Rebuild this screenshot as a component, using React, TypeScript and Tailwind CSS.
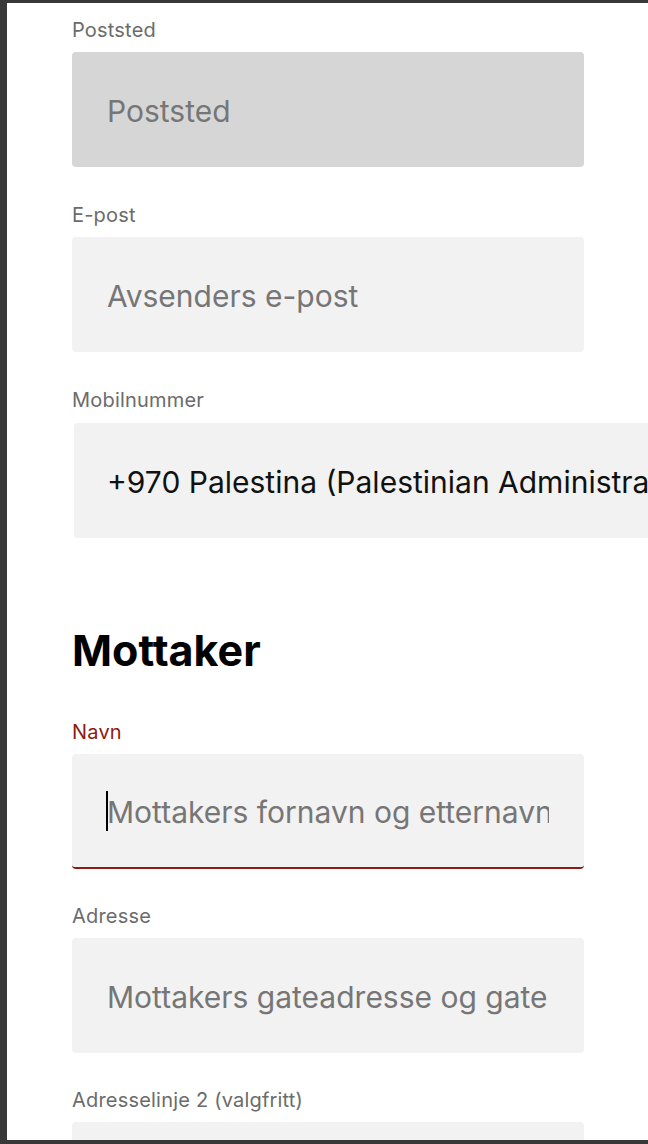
import React from 'react';

const font = { fontFamily: 'Inter, "Noto Sans", sans-serif' };

function Label({ text, error }: { text: string; error?: boolean }) {
  return (
    <div
      className={`h-6 text-[20px] leading-6 tracking-[0.2px] ${error ? 'text-[#8c1b13]' : 'text-[#6b6b6b]'}`}
    >
      {text}
    </div>
  );
}

function Field({
  label,
  placeholder,
  disabled,
  error,
  caret,
}: {
  label: string;
  placeholder?: string;
  disabled?: boolean;
  error?: boolean;
  caret?: boolean;
}) {
  return (
    <div className="flex flex-col gap-[10px]">
      <Label text={label} error={error} />
      <div
        className={`relative flex h-[115px] w-[512px] items-center rounded-[4px] px-[35px] pt-[3px] ${
          disabled ? 'bg-[#d6d6d6]' : 'bg-[#f2f2f2]'
        } ${error ? 'border-b-2 border-[#8c1b13]' : ''}`}
      >
        {caret && <span className="absolute left-[34px] top-[37px] h-[40px] w-[2px] bg-black" />}
        <div className="flex-1 overflow-hidden whitespace-nowrap text-[30px] text-[#767676]">
          {placeholder}
        </div>
      </div>
    </div>
  );
}

export default function App() {
  return (
    <div
      className="h-[1144px] w-[648px] overflow-hidden border-t-[3px] border-b-[4px] border-l-[7px] border-[#383838] bg-white"
      style={font}
    >
      <div className="flex flex-col pl-[65px] pt-[15px]">
        <Field label="Poststed" placeholder="Poststed" disabled />
        <div className="h-[36px]" />
        <Field label="E-post" placeholder="Avsenders e-post" />
        <div className="h-[36px]" />
        <div className="flex flex-col gap-[11px]">
          <Label text="Mobilnummer" />
          <div className="ml-[2px] flex h-[115px] w-[640px] items-center overflow-hidden rounded-[4px] bg-[#f2f2f2] pl-[33px] pt-[3px]">
            <span className="whitespace-nowrap text-[30px] text-[#111]">
              +970 Palestina (Palestinian Administra
            </span>
          </div>
        </div>
        <h2 className="mt-[88px] h-12 text-[43px] font-bold leading-[48px] text-black">Mottaker</h2>
        <div className="h-[46px]" />
        <Field label="Navn" placeholder="Mottakers fornavn og etternavn" error caret />
        <div className="h-[35px]" />
        <Field label="Adresse" placeholder="Mottakers gateadresse og gatenummer" />
        <div className="h-[35px]" />
        <Field label="Adresselinje 2 (valgfritt)" />
      </div>
    </div>
  );
}
